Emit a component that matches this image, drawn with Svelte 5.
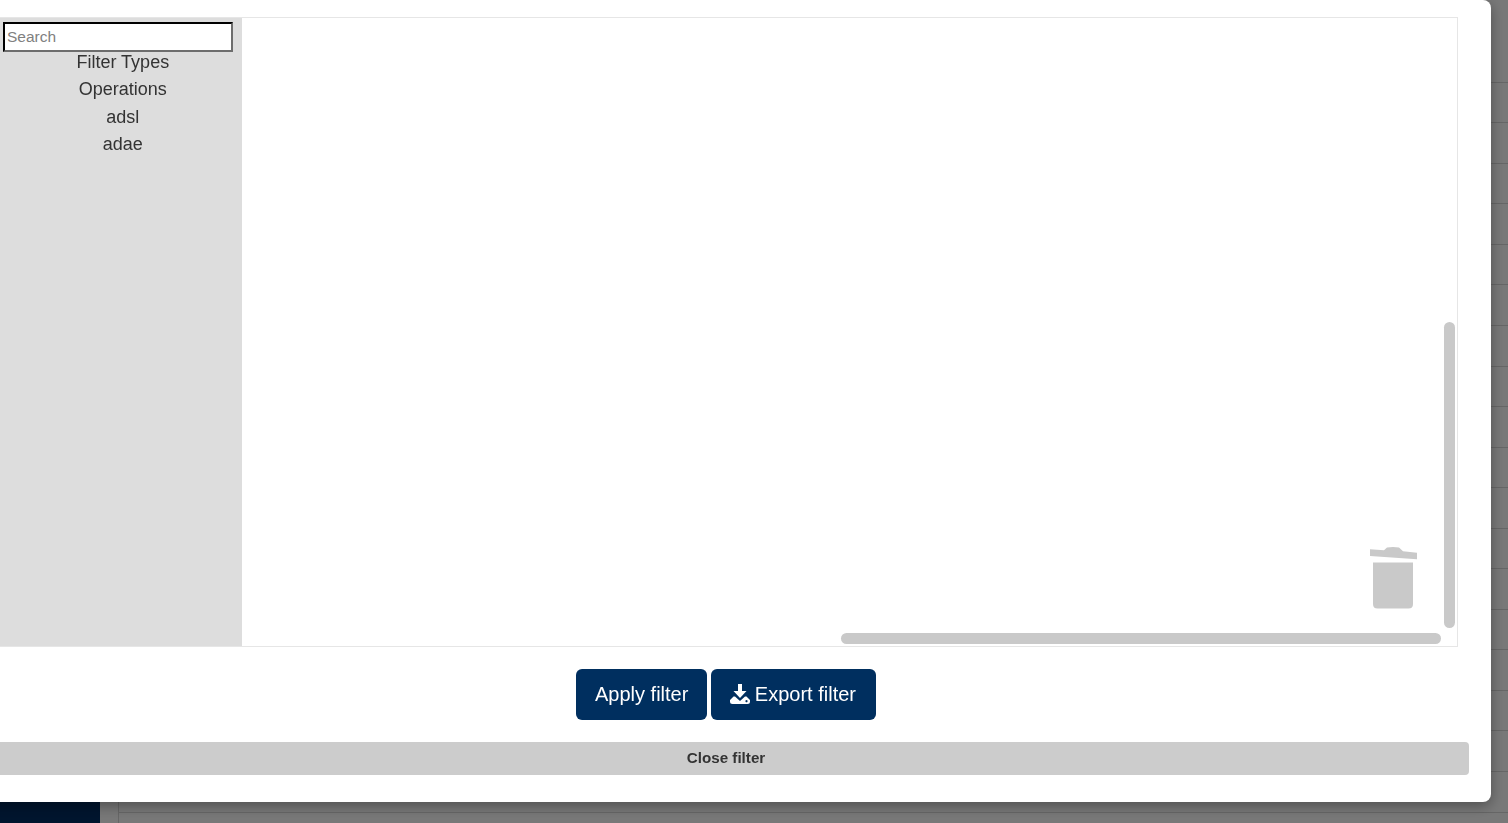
<script>
	const rows = Array.from({ length: 20 });
	const items = ['Filter Types', 'Operations', 'adsl', 'adae'];
</script>

<div class="page">
	<div class="nav"></div>
	<div class="table">
		{#each rows as _}
			<div class="row"></div>
		{/each}
	</div>
</div>

<div class="backdrop"></div>

<div class="modal">
	<div class="builder">
		<aside class="sidebar">
			<input class="search" type="text" placeholder="Search" />
			<ul>
				{#each items as item}
					<li>{item}</li>
				{/each}
			</ul>
		</aside>
		<div class="canvas">
			<svg class="trash" viewBox="0 0 47 62" aria-hidden="true">
				<path d="M0 2.3 L14 3.3 L17 0.4 Q23 -0.4 29 0.4 L33 4.3 L47 5.7 V12.3 L0 9 Z" />
				<path d="M3 15.5 H43 V57 Q43 61.5 38.5 61.5 H7.5 Q3 61.5 3 57 Z" />
			</svg>
			<div class="scroll vertical"></div>
			<div class="scroll horizontal"></div>
		</div>
	</div>

	<div class="actions">
		<button class="primary">Apply filter</button>
		<button class="primary export">
			<svg class="download" viewBox="0 0 20 20" aria-hidden="true">
				<path d="M8 0 H12 V7 H16.5 L10 14 L3.5 7 H8 Z" />
				<path
					fill-rule="evenodd"
					d="M3.5 12.5 H5 L10 17 L15 12.5 H16.5 L20 16 V17.5 Q20 20 17.5 20 H2.5 Q0 20 0 17.5 V16 Z M16.5 16 a1.1 1.1 0 1 0 0.01 0 Z"
				/>
			</svg>
			Export filter
		</button>
	</div>

	<button class="close">Close filter</button>
</div>

<style>
	:global(body) {
		margin: 0;
		overflow: hidden;
		font-family: 'Liberation Sans', Arial, sans-serif;
		color: #333;
	}

	.page {
		display: flex;
		height: 823px;
		background: #fff;
	}

	.nav {
		width: 100px;
		background: #002d62;
	}

	.table {
		flex: 1;
		margin-left: 18px;
		padding-top: 42.2px;
		border-left: 1px solid #d8d8d8;
	}

	.row {
		height: 40.56px;
		box-sizing: border-box;
		border-bottom: 1px solid #d8d8d8;
	}

	.backdrop {
		position: fixed;
		inset: 0;
		background: rgba(0, 0, 0, 0.53);
	}

	.modal {
		position: fixed;
		top: 0;
		left: -39px;
		right: 17px;
		bottom: 21px;
		box-sizing: border-box;
		display: flex;
		flex-direction: column;
		align-items: center;
		padding: 17px 22px 27px;
		background: #fff;
		border-radius: 8px;
		box-shadow: 0 4px 14px rgba(0, 0, 0, 0.35);
	}

	.builder {
		display: flex;
		align-self: stretch;
		height: 630px;
		box-sizing: border-box;
		border: 1px solid #e6e6e6;
		border-left: 0;
		margin-right: 11px;
	}

	.sidebar {
		width: 259px;
		flex: none;
		box-sizing: border-box;
		padding: 4px 0 0 20px;
		background: #ddd;
	}

	.search {
		display: block;
		width: 230px;
		height: 30px;
		box-sizing: border-box;
		padding: 1px 2px;
		font: 15.5px 'Liberation Sans', Arial, sans-serif;
		background: #fff;
		border: 2px inset #767676;
		border-color: #222 #6d6d6d #6d6d6d #222;
		border-radius: 0;
	}

	.search::placeholder {
		color: #808080;
	}

	ul {
		margin: -3px 0 0;
		padding: 0 0 0 0.6px;
		list-style: none;
		text-align: center;
	}

	li {
		font-size: 18px;
		line-height: 27.33px;
	}

	.canvas {
		position: relative;
		flex: 1;
		background: #fff;
	}

	.trash {
		position: absolute;
		right: 40px;
		bottom: 37px;
		width: 47px;
		height: 62px;
		overflow: visible;
		fill: #c9c9c9;
	}

	.scroll {
		position: absolute;
		background: #c9c9c9;
		border-radius: 6px;
	}

	.vertical {
		right: 2px;
		bottom: 18px;
		width: 11px;
		height: 306px;
	}

	.horizontal {
		right: 16px;
		bottom: 2px;
		width: 600px;
		height: 11px;
	}

	.actions {
		display: flex;
		gap: 4px;
		margin-top: 22px;
	}

	.primary {
		display: flex;
		align-items: center;
		gap: 6px;
		height: 51px;
		padding: 0 19px;
		font: 20px 'Liberation Sans', Arial, sans-serif;
		color: #fff;
		background: #002f5f;
		border: 0;
		border-radius: 6px;
	}

	.export {
		gap: 5px;
		padding-right: 20px;
	}

	.download {
		width: 20px;
		height: 20px;
		margin-top: -2px;
		margin-left: -0.5px;
		fill: #fff;
	}

	.close {
		align-self: stretch;
		height: 33px;
		margin-top: 22px;
		padding: 0 0 2px;
		font: bold 15.2px 'Liberation Sans', Arial, sans-serif;
		color: #333;
		background: #ccc;
		border: 0;
		border-radius: 4px;
	}
</style>
